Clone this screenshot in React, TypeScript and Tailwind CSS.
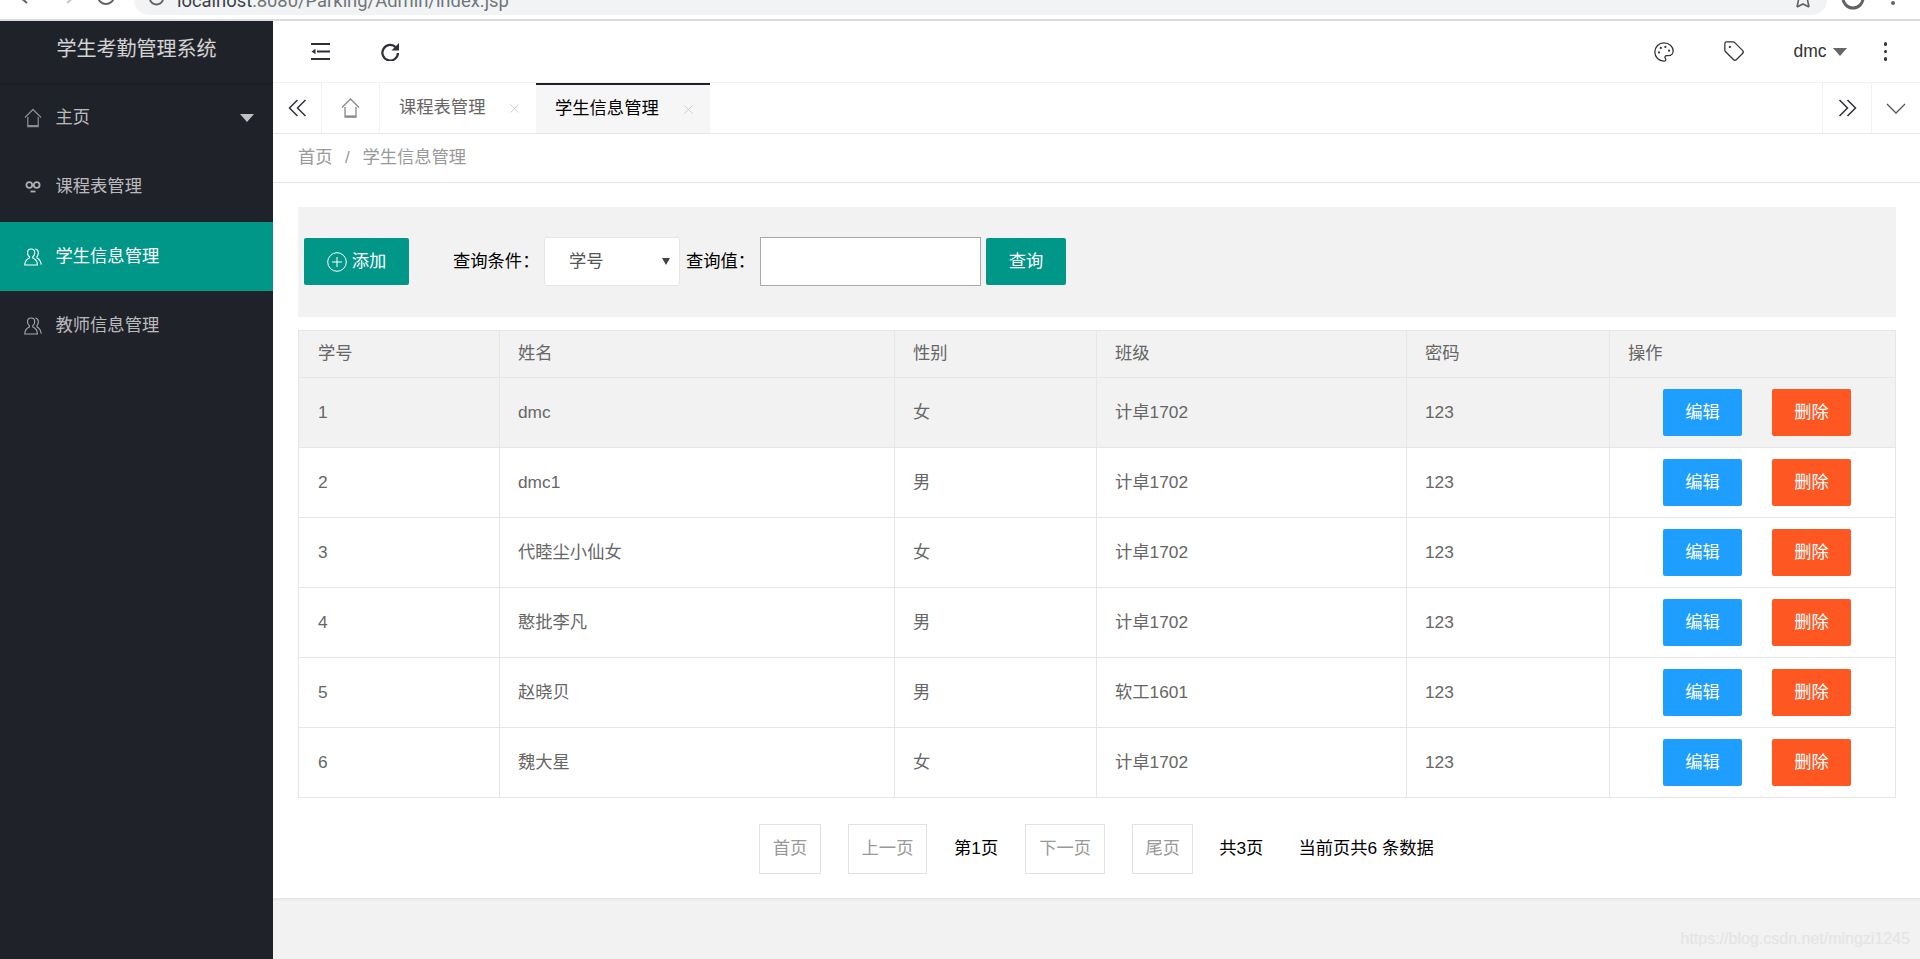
import React from "react";
import { Palette, Tag, X } from "lucide-react";

const HomeIcon = ({ c = "#8d8d8d" }: { c?: string }) => (
  <svg width="19" height="20" viewBox="0 0 19 20" fill="none" stroke={c} strokeWidth="1.3">
    <path d="M1 9.5 9.5 1 18 9.5" />
    <path d="M4 9v10h11V9" />
    <path d="M4 18.3h11" strokeWidth="1.8" />
  </svg>
);

const LinkIcon = () => (
  <svg width="16" height="12" viewBox="0 0 16 12" fill="none" stroke="#b0b0b0" strokeWidth="1.8">
    <circle cx="4.3" cy="4" r="2.9" />
    <circle cx="11.7" cy="4" r="2.9" />
    <path d="M5.500 10.500h5" />
  </svg>
);

const UsersIcon = ({ c }: { c: string }) => (
  <svg width="19" height="20" viewBox="0 0 19 20" fill="none" stroke={c} strokeWidth="1.2">
    <path d="M7.5 1.5c-2.4 0-3.8 1.8-3.8 4 0 2 1 3.5 2 4.3v1.2C3 12 .9 14.3.8 18.5h13.4c-.1-4.2-2.2-6.5-4.9-7.5V9.8c1-.8 2-2.3 2-4.3 0-2.2-1.4-4-3.8-4Z" />
    <path d="M12 1.6c2 .4 3.2 2 3.2 4 0 1.700-.7 3-1.500 3.900v1.500c2.200 1 4 3 4.500 7" />
  </svg>
);

const ShrinkIcon = () => (
  <svg width="19" height="17" viewBox="0 0 19 17" fill="#2f3137">
    <rect x="0" y="0" width="19" height="2" />
    <rect x="0" y="15" width="19" height="2" />
    <rect x="6" y="7.500" width="13" height="2" />
    <path d="M0.500 8.500 4.500 5.800v5.400Z" />
  </svg>
);

const RefreshIcon = () => (
  <svg width="19" height="19" viewBox="0 0 19 19" fill="none" stroke="#2f3137" strokeWidth="2.300">
    <path d="M15 5.500A7.800 7.800 0 1 0 17 11" />
    <path d="M18 1v7.500h-7.500Z" fill="#2f3137" stroke="none" />
  </svg>
);

const DoubleChevron = ({ dir }: { dir: "l" | "r" }) => (
  <svg width="19" height="18" viewBox="0 0 19 18" fill="none" stroke="#2f3137" strokeWidth="1.500">
    {dir === "l" ? (
      <>
        <path d="M9.500 1 1.500 9l8 8" />
        <path d="M17.500 1l-8 8 8 8" />
      </>
    ) : (
      <>
        <path d="M1.500 1l8 8-8 8" />
        <path d="M9.500 1l8 8-8 8" />
      </>
    )}
  </svg>
);

const Tri = ({ cls }: { cls: string }) => (
  <span className={`w-0 h-0 border-x-[7.5px] border-x-transparent border-t-[8px] ${cls}`} />
);

const navItems = [
  { label: "主页", icon: <HomeIcon />, arrow: true },
  { label: "课程表管理", icon: <LinkIcon /> },
  { label: "学生信息管理", icon: <UsersIcon c="#ffffff" />, active: true },
  { label: "教师信息管理", icon: <UsersIcon c="#a8a8a8" /> },
];

const rows = [
  ["1", "dmc", "女", "计卓1702", "123"],
  ["2", "dmc1", "男", "计卓1702", "123"],
  ["3", "代睦尘小仙女", "女", "计卓1702", "123"],
  ["4", "憨批李凡", "男", "计卓1702", "123"],
  ["5", "赵晓贝", "男", "软工1601", "123"],
  ["6", "魏大星", "女", "计卓1702", "123"],
];

const headers = ["学号", "姓名", "性别", "班级", "密码", "操作"];

const PageBox = ({ w, ml, children }: { w: string; ml: string; children: React.ReactNode }) => (
  <span className={`flex h-[50px] items-center justify-center border border-[#e2e2e2] text-[#999999] ${w} ${ml}`}>
    {children}
  </span>
);

export default function App() {
  return (
    <div className="relative flex h-[959px] w-[1920px] flex-col overflow-hidden bg-[#f2f2f2] font-['Liberation_Sans','Noto_Sans_CJK_SC',sans-serif] text-[17.3px]">
      {/* browser chrome */}
      <div className="flex h-[21px] shrink-0 items-start overflow-hidden border-b-2 border-[#dcdce1] bg-white">
        <div className="flex h-[15px] w-[134px] shrink-0 items-end">
          <svg width="134" height="15" viewBox="0 0 134 15" fill="none" strokeWidth="2">
            <path d="M27-6 21-2l6 5" stroke="#5f6368" />
            <path d="m67-6 6 4-6 5" stroke="#c4c7cb" />
            <path d="M114-3a8 8 0 0 1-8 7 8 8 0 0 1-8-7" stroke="#5f6368" />
          </svg>
        </div>
        <div className="flex h-[15px] w-[1693px] shrink-0 items-end rounded-b-[15px] bg-[#f1f3f4] pl-[14px]">
          <svg width="20" height="15" viewBox="0 0 20 15" fill="none" stroke="#5f6368" strokeWidth="2" className="shrink-0">
            <path d="M15 0a7 7 0 0 1-13 0" />
          </svg>
          <span className="mb-[5px] ml-[9px] font-['Roboto',sans-serif] text-[18.4px] leading-[18px] text-[#3c4043]">
            localhost<span className="text-[#70757a]">:8080/Parking/Admin/index.jsp</span>
          </span>
          <svg width="20" height="15" viewBox="0 0 20 15" fill="none" stroke="#5f6368" strokeWidth="1.600" className="ml-auto mr-[14px] shrink-0">
            <path d="M4 7 5.500 0M16 7 14.500 0M4 7l6-3 6 3" />
          </svg>
        </div>
        <div className="flex h-[15px] grow items-start">
          <svg width="93" height="15" viewBox="0 0 93 15" fill="none">
            <path d="M16-2a10 10 0 0 0 20 0" stroke="#5f6368" strokeWidth="3" />
            <circle cx="66" cy="3" r="2" fill="#5f6368" />
          </svg>
        </div>
      </div>

      <div className="flex min-h-0 grow">
        {/* sidebar */}
        <aside className="w-[273px] shrink-0 bg-[#20222a]">
          <div className="flex h-[61.5px] items-center justify-center pb-[5px] text-[20px] text-white/80 shadow-[0_1px_2px_rgba(0,0,0,0.2)]">
            学生考勤管理系统
          </div>
          {navItems.map((n) => (
            <div
              key={n.label}
              className={`flex h-[69.500px] items-center pl-[24px] pr-[19px] pt-[1px] ${n.active ? "bg-[#009688] text-white" : "text-white/70"}`}
            >
              <span className="flex w-[18px] justify-center">{n.icon}</span>
              <span className="ml-[13.500px]">{n.label}</span>
              {n.arrow && <Tri cls="ml-auto border-t-[#c2c2c2]" />}
            </div>
          ))}
        </aside>

        {/* main */}
        <main className="flex min-w-0 grow flex-col">
          <header className="flex h-[61px] shrink-0 items-center bg-white text-[#333333]">
            <span className="ml-[38px]"><ShrinkIcon /></span>
            <span className="ml-[51px]"><RefreshIcon /></span>
            <Palette size={22} strokeWidth={1.4} color="#333" className="ml-auto" />
            <Tag size={22} strokeWidth={1.4} color="#333" className="ml-[48px] -translate-y-[1px]" />
            <span className="ml-[48px] text-[17.5px] leading-none">dmc</span>
            <Tri cls="ml-[6px] border-t-[#666666]" />
            <span className="ml-[37px] mr-[33px] flex flex-col gap-[4px]">
              <i className="block h-[3.500px] w-[3.500px] rounded-full bg-[#333]" />
              <i className="block h-[3.500px] w-[3.500px] rounded-full bg-[#333]" />
              <i className="block h-[3.500px] w-[3.500px] rounded-full bg-[#333]" />
            </span>
          </header>

          {/* tab bar */}
          <div className="flex h-[52px] shrink-0 border-y border-[#f2f2f2] border-b-[#e8e8e8] bg-white shadow-[0_1px_2px_rgba(0,0,0,0.05)]">
            <span className="flex w-[49px] items-center justify-center border-r border-[#f2f2f2]">
              <DoubleChevron dir="l" />
            </span>
            <span className="flex w-[58px] items-center justify-center border-r border-[#f2f2f2]">
              <HomeIcon c="#888888" />
            </span>
            <span className="flex w-[156px] items-center pl-[19px] text-[#666666]">
              课程表管理
              <X size={15} strokeWidth={1.3} color="#c2c2c2" className="ml-[22px]" />
            </span>
            <span className="flex w-[174px] items-center border-t-[2px] border-[#20222a] bg-[#f6f6f6] pl-[19px] text-black">
              学生信息管理
              <X size={15} strokeWidth={1.3} color="#c2c2c2" className="ml-[22px]" />
            </span>
            <span className="ml-auto flex w-[49px] items-center justify-center border-l border-[#f2f2f2]">
              <DoubleChevron dir="r" />
            </span>
            <span className="flex w-[49px] items-center justify-center border-l border-[#f2f2f2]">
              <svg width="20" height="11" viewBox="0 0 20 11" fill="none" stroke="#555" strokeWidth="1.300">
                <path d="M1 1l9 9 9-9" />
              </svg>
            </span>
          </div>

          {/* breadcrumb */}
          <div className="flex h-[49px] shrink-0 items-center border-b border-[#e6e6e6] bg-white pl-[25px] text-[#999999]">
            <span>首页</span>
            <span className="mx-[12.500px]">/</span>
            <span>学生信息管理</span>
          </div>

          {/* content */}
          <section className="h-[716px] shrink-0 border-b border-[#e6e6e6] bg-white pl-[25px] pr-[24px] pt-[24px] shadow-[0_1px_2px_rgba(0,0,0,0.05)]">
            <div className="flex h-[110px] items-center bg-[#f2f2f2] pb-[1px] pl-[6px]">
              <button className="flex h-[47px] w-[105px] items-center justify-center gap-[5px] rounded-[2px] bg-[#009688] text-white">
                <svg width="20" height="20" viewBox="0 0 20 20" fill="none" stroke="#fff" strokeWidth="1">
                  <circle cx="10" cy="10" r="9.300" />
                  <path d="M10 5v10M5 10h10" />
                </svg>
                添加
              </button>
              <span className="ml-[44px] w-[91px] text-black">查询条件：</span>
              <div className="flex h-[49px] w-[136px] items-center justify-between rounded-[3px] border border-[#e6e6e6] bg-white pl-[24px] pr-[9px] text-[#555555]">
                学号
                <span className="h-0 w-0 border-x-[4px] border-x-transparent border-t-[7px] border-t-[#444]" />
              </div>
              <span className="ml-[6px] w-[74px] text-black">查询值：</span>
              <input className="h-[49px] w-[221px] border-[1.500px] border-[#a9a9a9] bg-white outline-none" />
              <button className="ml-[5px] h-[47px] w-[80px] rounded-[2px] bg-[#009688] text-white">查询</button>
            </div>

            <table className="mt-[13px] w-[1597px] table-fixed border-collapse text-[#666666]">
              <colgroup>
                <col className="w-[201px]" />
                <col className="w-[395px]" />
                <col className="w-[202px]" />
                <col className="w-[310px]" />
                <col className="w-[203px]" />
                <col className="w-[286px]" />
              </colgroup>
              <thead>
                <tr className="h-[47px] bg-[#f2f2f2]">
                  {headers.map((h, j) => (
                    <th key={h} className={`border border-[#e6e6e6] text-left font-normal ${j === 0 ? "pl-[19px]" : "pl-[18px]"}`}>{h}</th>
                  ))}
                </tr>
              </thead>
              <tbody>
                {rows.map((r, i) => (
                  <tr key={r[0]} className={`h-[70px] ${i === 0 ? "bg-[#f2f2f2]" : ""}`}>
                    {r.map((c, j) => (
                      <td key={j} className={`border border-[#e6e6e6] ${j === 0 ? "pl-[19px]" : "pl-[18px]"}`}>{c}</td>
                    ))}
                    <td className="border border-[#e6e6e6] pl-[53px]">
                      <div className="flex gap-[30px]">
                        <button className="h-[47px] w-[79px] rounded-[2px] bg-[#1e9fff] text-white">编辑</button>
                        <button className="h-[47px] w-[79px] rounded-[2px] bg-[#ff5722] text-white">删除</button>
                      </div>
                    </td>
                  </tr>
                ))}
              </tbody>
            </table>

            <div className="mt-[26px] flex items-center pl-[461px] text-black">
              <PageBox w="w-[62px]" ml="">首页</PageBox>
              <PageBox w="w-[79px]" ml="ml-[27px]">上一页</PageBox>
              <span className="ml-[27px]">第1页</span>
              <PageBox w="w-[80px]" ml="ml-[27px]">下一页</PageBox>
              <PageBox w="w-[61px]" ml="ml-[27px]">尾页</PageBox>
              <span className="ml-[26px]">共3页</span>
              <span className="ml-[35px]">当前页共6 条数据</span>
            </div>
          </section>
        </main>
      </div>

      <span className="absolute bottom-[10px] right-[10px] text-[16px] leading-5 text-[#e4e4e4] [text-shadow:0_0_1px_#ececec]">
        https://blog.csdn.net/mingzi1245
      </span>
    </div>
  );
}
